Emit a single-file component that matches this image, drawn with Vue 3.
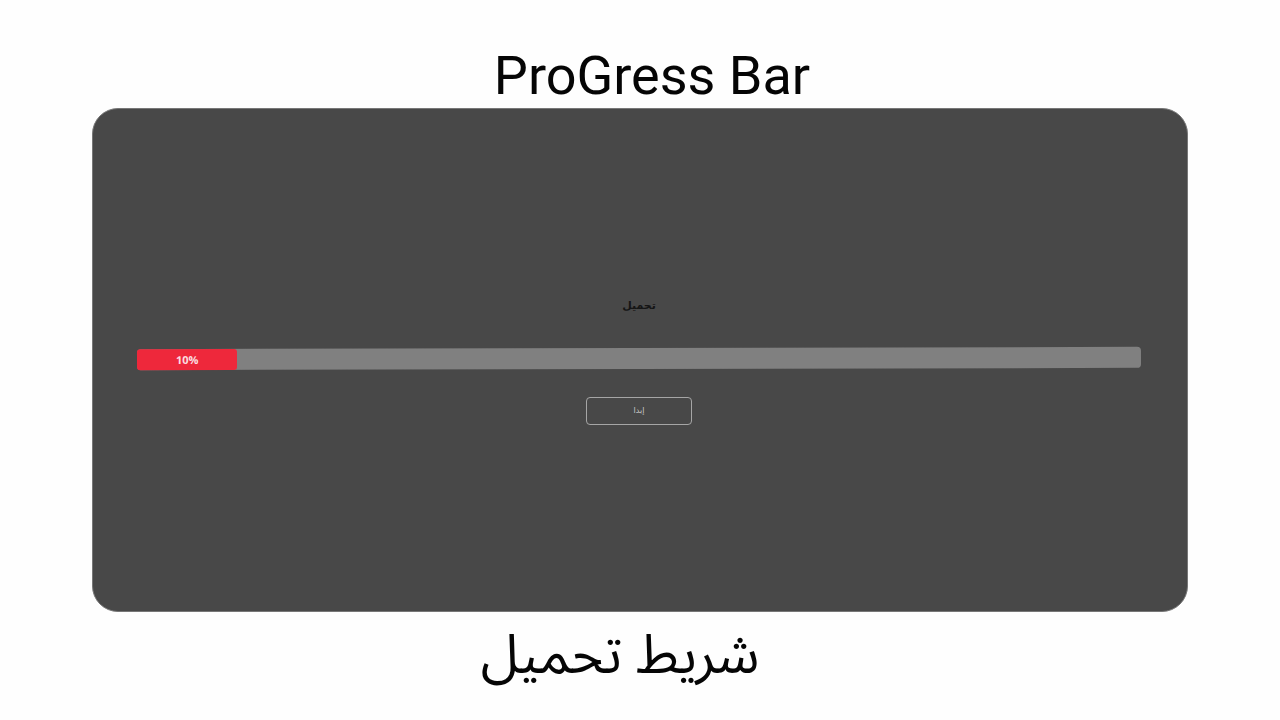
<script setup>
import { ref } from 'vue'

const progress = ref(10)

function start() {
  progress.value = Math.min(100, progress.value + 10)
}
</script>

<template>
  <main class="page">
    <h1 class="title">ProGress Bar</h1>
    <section class="card">
      <h2 id="loading" class="label" lang="ar" dir="rtl">تحميل</h2>
      <div
        class="track"
        role="progressbar"
        aria-labelledby="loading"
        aria-valuemin="0"
        aria-valuemax="100"
        :aria-valuenow="progress"
      >
        <div class="fill" :style="{ width: progress + '%' }">{{ progress }}%</div>
      </div>
      <button class="start" type="button" lang="ar" dir="rtl" @click="start">إبدا</button>
    </section>
    <p class="caption" lang="ar" dir="rtl">شريط تحميل</p>
  </main>
</template>

<style>
body {
  background: #fefefe;
}
</style>

<style scoped>
.page {
  box-sizing: border-box;
  display: flex;
  flex-direction: column;
  min-height: 100vh;
  padding: 44px 92px 20px;
}

.title {
  margin: 0;
  padding-left: 24px;
  color: #050505;
  font: 400 54px/64px Roboto, "Liberation Sans", sans-serif;
  text-align: center;
}

.card {
  box-sizing: border-box;
  display: flex;
  flex: 1;
  flex-direction: column;
  align-items: center;
  justify-content: center;
  padding: 0 46px 2px 44px;
  border: 1px solid #777;
  border-radius: 26px;
  background: #484848;
}

.label {
  margin: 0 0 30px;
  color: #151515;
  font: 700 11px/24px "DejaVu Sans", sans-serif;
}

.track {
  width: 100%;
  border-radius: 4px;
  background: #808080;
  transform: rotate(-0.13deg);
}

.fill {
  border-radius: 3px;
  background: #ee283b;
  color: #fbdde0;
  font: 700 11px/21px "Open Sans", sans-serif;
  text-align: center;
}

.start {
  box-sizing: border-box;
  width: 106px;
  height: 28px;
  margin: 28px 0 0;
  padding: 0;
  border: 1px solid #a6a6a6;
  border-radius: 4px;
  background: transparent;
  color: #c8c8c8;
  font: 400 8px/16px "DejaVu Sans", sans-serif;
  cursor: pointer;
}

.caption {
  margin: 0;
  padding-right: 40px;
  color: #050505;
  font: 400 54px/88px "Noto Sans Arabic", "DejaVu Sans", sans-serif;
  text-align: center;
}
</style>
